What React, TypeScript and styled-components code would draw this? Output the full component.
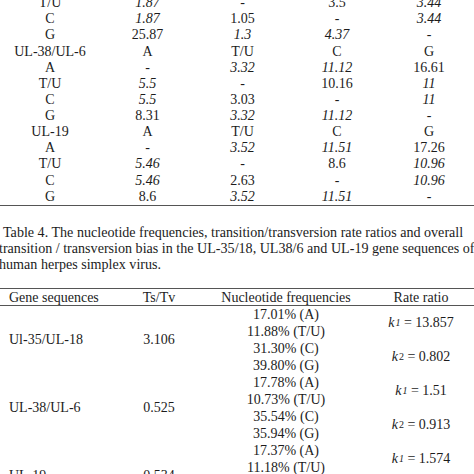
import React from 'react';
import styled, { createGlobalStyle } from 'styled-components';

const GlobalStyle = createGlobalStyle`
  html, body {
    margin: 0;
    padding: 0;
    background: #ffffff;
  }
  body {
    font-family: "Liberation Serif", "Times New Roman", serif;
    font-size: 14px;
    color: #1c1c1c;
    overflow: hidden;
  }
`;

const Page = styled.div`
  width: 474px;
  height: 474px;
  overflow: hidden;
`;

const RateTable = styled.div`
  display: grid;
  grid-template-columns: 100px 95px 95px 94px 90px;
  margin-top: -4.8px;
  border-bottom: 1px solid #555;
`;

const RateCell = styled.div<{ $italic?: boolean }>`
  height: 16.14px;
  line-height: 16.14px;
  text-align: center;
  white-space: nowrap;
  font-style: ${p => (p.$italic ? 'italic' : 'normal')};
`;

const Caption = styled.p`
  margin: 18px 0 0 -1px;
  text-indent: 4px;
  font-size: 14.1px;
  line-height: 16px;
  width: 490px;
  white-space: nowrap;
`;

const FreqHead = styled.div`
  display: grid;
  grid-template-columns: 120px 78px 176px 94px;
  margin-top: 16px;
  border-top: 1px solid #555;
  border-bottom: 1px solid #555;
`;

const HeadCell = styled.div<{ $left?: boolean }>`
  height: 16px;
  line-height: 17px;
  text-align: ${p => (p.$left ? 'left' : 'center')};
  padding-left: ${p => (p.$left ? '9px' : '0')};
  white-space: nowrap;
`;

const FreqBody = styled.div`
  display: grid;
  grid-template-columns: 120px 78px 176px 94px;
  grid-auto-rows: 17px;
`;

const SpanCell = styled.div<{ $left?: boolean }>`
  grid-row: span 4;
  display: flex;
  align-items: center;
  justify-content: ${p => (p.$left ? 'flex-start' : 'center')};
  padding-left: ${p => (p.$left ? '9px' : '0')};
  white-space: nowrap;
`;

const FreqCol = styled.div`
  grid-row: span 4;
  display: flex;
  flex-direction: column;
`;

const FreqLine = styled.div`
  height: 17px;
  line-height: 17px;
  text-align: center;
  white-space: nowrap;
`;

const RatioCol = styled.div`
  grid-row: span 4;
  display: grid;
  grid-template-rows: 34px 34px;
`;

const Ratio = styled.div`
  display: flex;
  align-items: center;
  justify-content: center;
  white-space: nowrap;
  padding-top: 1px;

  i {
    font-style: italic;
  }
  sub {
    font-size: 10px;
    vertical-align: -3px;
    line-height: 0;
    margin-left: 1px;
  }
`;

type Val = string | [string];

const rateRows: Val[][] = [
  ['T/U', ['1.87'], '-', '3.5', ['3.44']],
  ['C', ['1.87'], '1.05', '-', ['3.44']],
  ['G', '25.87', ['1.3'], ['4.37'], '-'],
  ['UL-38/UL-6', 'A', 'T/U', 'C', 'G'],
  ['A', '-', ['3.32'], ['11.12'], '16.61'],
  ['T/U', ['5.5'], '-', '10.16', ['11']],
  ['C', ['5.5'], '3.03', '-', ['11']],
  ['G', '8.31', ['3.32'], ['11.12'], '-'],
  ['UL-19', 'A', 'T/U', 'C', 'G'],
  ['A', '-', ['3.52'], ['11.51'], '17.26'],
  ['T/U', ['5.46'], '-', '8.6', ['10.96']],
  ['C', ['5.46'], '2.63', '-', ['10.96']],
  ['G', '8.6', ['3.52'], ['11.51'], '-'],
];

const genes = [
  {
    name: 'Ul-35/UL-18',
    tstv: '3.106',
    freqs: ['17.01% (A)', '11.88% (T/U)', '31.30% (C)', '39.80% (G)'],
    k1: '13.857',
    k2: '0.802',
  },
  {
    name: 'UL-38/UL-6',
    tstv: '0.525',
    freqs: ['17.78% (A)', '10.73% (T/U)', '35.54% (C)', '35.94% (G)'],
    k1: '1.51',
    k2: '0.913',
  },
  {
    name: 'UL-19',
    tstv: '0.534',
    freqs: ['17.37% (A)', '11.18% (T/U)', '34.21% (C)', '37.24% (G)'],
    k1: '1.574',
    k2: '0.921',
  },
];

const App: React.FC = () => {
  return (
    <Page>
      <GlobalStyle />
      <RateTable>
        {rateRows.map((row, r) =>
          row.map((v, c) => {
            const italic = Array.isArray(v);
            return (
              <RateCell key={`${r}-${c}`} $italic={italic}>
                {italic ? v[0] : v}
              </RateCell>
            );
          })
        )}
      </RateTable>

      <Caption>
        Table 4. The nucleotide frequencies, transition/transversion rate ratios and overall
        <br />
        transition / transversion bias in the UL-35/18, UL38/6 and UL-19 gene sequences of
        <br />
        human herpes simplex virus.
      </Caption>

      <FreqHead>
        <HeadCell $left>Gene sequences</HeadCell>
        <HeadCell>Ts/Tv</HeadCell>
        <HeadCell>Nucleotide frequencies</HeadCell>
        <HeadCell>Rate ratio</HeadCell>
      </FreqHead>

      <FreqBody>
        {genes.map(g => (
          <React.Fragment key={g.name}>
            <SpanCell $left>{g.name}</SpanCell>
            <SpanCell>{g.tstv}</SpanCell>
            <FreqCol>
              {g.freqs.map(f => (
                <FreqLine key={f}>{f}</FreqLine>
              ))}
            </FreqCol>
            <RatioCol>
              <Ratio>
                <i>k</i><sub><i>1</i></sub>&nbsp;= {g.k1}
              </Ratio>
              <Ratio>
                <i>k</i><sub>2</sub>&nbsp;= {g.k2}
              </Ratio>
            </RatioCol>
          </React.Fragment>
        ))}
      </FreqBody>
    </Page>
  );
};

export default App;
